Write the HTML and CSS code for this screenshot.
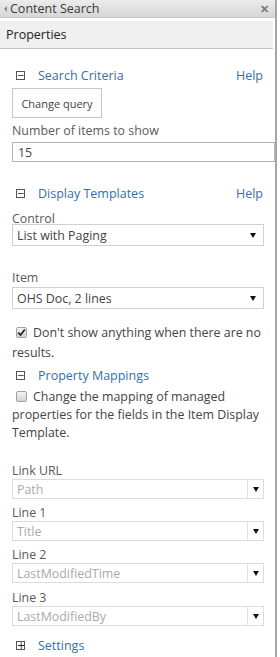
FILE: index.html
```html
<!DOCTYPE html>
<html>
	<head>
		<title>Content Search</title>
		<meta name="viewport" content="width=device-width, initial-scale=1">
		<link rel="stylesheet" href="styles.css">
	</head>
	<body>
		<div class="pane">
			<div class="titlebar">
				<span class="arrow"></span>
				<span class="title">Content Search</span>
				<span class="close">&#x2715;</span>
			</div>
			<div class="props">Properties</div>

			<div class="section criteria">
				<div class="head">
					<span class="toggle">&minus;</span>
					<a class="name">Search Criteria</a>
					<a class="help">Help</a>
				</div>
				<button class="btn">Change query</button>
				<label class="lbl">Number of items to show</label>
				<input class="text" type="text" value="15">
			</div>

			<div class="section templates">
				<div class="head">
					<span class="toggle">&minus;</span>
					<a class="name">Display Templates</a>
					<a class="help">Help</a>
				</div>
				<label class="lbl">Control</label>
				<div class="select">List with Paging<span class="caret"></span></div>
				<label class="lbl gap">Item</label>
				<div class="select">OHS Doc, 2 lines<span class="caret"></span></div>
			</div>

			<div class="check noresults">
				<span class="box"><svg width="9" height="9" viewBox="0 0 9 9"><path d="M1.2 4.6 L3.6 7 L7.8 1.6" fill="none" stroke="#222" stroke-width="1.7"/></svg></span>Don't show anything when there are no results.
			</div>

			<div class="section mappings">
				<div class="head">
					<span class="toggle">&minus;</span>
					<a class="name">Property Mappings</a>
				</div>
				<div class="check inner">
					<span class="box"></span>Change the mapping of managed properties for the fields in the Item Display Template.
				</div>
				<label class="lbl first">Link URL</label>
				<div class="select off">Path<span class="caret"></span></div>
				<label class="lbl">Line 1</label>
				<div class="select off">Title<span class="caret"></span></div>
				<label class="lbl">Line 2</label>
				<div class="select off">LastModifiedTime<span class="caret"></span></div>
				<label class="lbl last">Line 3</label>
				<div class="select off">LastModifiedBy<span class="caret"></span></div>
			</div>

			<div class="section settings">
				<div class="head">
					<span class="toggle">+</span>
					<a class="name">Settings</a>
				</div>
			</div>
		</div>
	</body>
</html>
```

FILE: styles.css
```css
html, body {
	margin: 0;
	padding: 0;
	background: #fff;
	font-family: "Open Sans", "Noto Sans", sans-serif;
	font-size: 12.4px;
	color: #444;
}
.pane {
	width: 275px;
	height: 657px;
	border-right: 2px solid #a6a6a6;
	overflow: hidden;
}
.titlebar {
	height: 17px;
	display: flex;
	align-items: center;
	background: linear-gradient(#ececec, #d6d6d6);
	border-bottom: 1px solid #c8c8c8;
	color: #3a3a3a;
	font-size: 12.5px;
}
.arrow {
	width: 0;
	height: 0;
	margin: 0 3px 0 4px;
	border-top: 3px solid transparent;
	border-bottom: 3px solid transparent;
	border-right: 3px solid #888;
}
.title {
	flex: 1;
}
.close {
	color: #777;
	font-size: 11px;
	font-weight: bold;
	margin-right: 6px;
}
.props {
	margin: 3px 2px 0 0;
	height: 27px;
	line-height: 27px;
	padding-left: 6px;
	background: #efefef;
	border-bottom: 1px solid #c6c6c6;
	color: #222;
	font-size: 12.5px;
}
.section {
	padding-left: 12px;
}
.head {
	display: flex;
	align-items: center;
	height: 18px;
	margin: 17px 0 4px 4px;
	padding-right: 12px;
}
.toggle {
	width: 7px;
	height: 7px;
	border: 1px solid #555;
	font-size: 9px;
	line-height: 7px;
	text-align: center;
	color: #222;
	font-family: "DejaVu Sans", sans-serif;
	margin-right: 13px;
}
.name,
.help {
	color: #3570aa;
	font-size: 12.5px;
}
.name {
	flex: 1;
}
.btn {
	display: block;
	width: 90px;
	height: 30px;
	margin: 1px 0 0 0;
	padding: 0;
	background: #fdfdfd;
	border: 1px solid #c6c6c6;
	font-family: inherit;
	font-size: 11px;
	color: #444;
}
.lbl {
	display: block;
	height: 16px;
	line-height: 16px;
	color: #5a5a5a;
}
.criteria .lbl {
	margin-top: 5px;
}
.text {
	display: block;
	box-sizing: border-box;
	width: 263px;
	height: 20px;
	margin-top: 3px;
	padding: 0 5px;
	border: 1px solid #b4b4b4;
	font-family: inherit;
	font-size: 12.4px;
	color: #444;
}
.templates .head {
	margin-top: 22px;
}
.templates .lbl {
	margin-top: 9px;
	height: 13px;
}
.templates .lbl.gap {
	margin-top: 24px;
	height: 17px;
}
.select {
	box-sizing: border-box;
	width: 252px;
	height: 22px;
	padding-left: 4px;
	border: 1px solid #d0d0d0;
	display: flex;
	justify-content: space-between;
	align-items: center;
	color: #444;
}
.caret {
	width: 0;
	height: 0;
	margin-right: 7px;
	border-left: 3px solid transparent;
	border-right: 3px solid transparent;
	border-top: 5px solid #111;
}
.select.off {
	height: 20px;
	color: #aaa;
	border-color: #dcdcdc;
}
.select.off .caret {
	width: 15px;
	height: 18px;
	margin-right: 0;
	border: none;
	border-left: 1px solid #e2e2e2;
	display: flex;
	align-items: center;
	justify-content: center;
}
.select.off .caret::after {
	content: "";
	border-left: 3px solid transparent;
	border-right: 3px solid transparent;
	border-top: 5px solid #111;
}
.check {
	color: #444;
}
.noresults {
	margin: 14px 0 0 12px;
	line-height: 20px;
}
.box {
	display: inline-block;
	box-sizing: border-box;
	width: 11px;
	height: 11px;
	margin: 0 6px 0 4px;
	border: 1px solid #a0a0a0;
	border-radius: 2px;
	background: linear-gradient(#f4f4f4, #d4d4d4);
	vertical-align: -1px;
	position: relative;
}
.box svg {
	position: absolute;
	left: 0;
	top: 0;
}
.mappings .head {
	margin-top: 3px;
}
.check.inner {
	margin-top: 4px;
	line-height: 18px;
}
.mappings .lbl {
	margin-top: 6px;
}
.mappings .lbl.first {
	margin-top: 21px;
}
.mappings .lbl.last {
	margin-top: 7px;
}
.settings .head {
	margin-top: 10px;
}
.settings .toggle {
	font-size: 10px;
}
```
